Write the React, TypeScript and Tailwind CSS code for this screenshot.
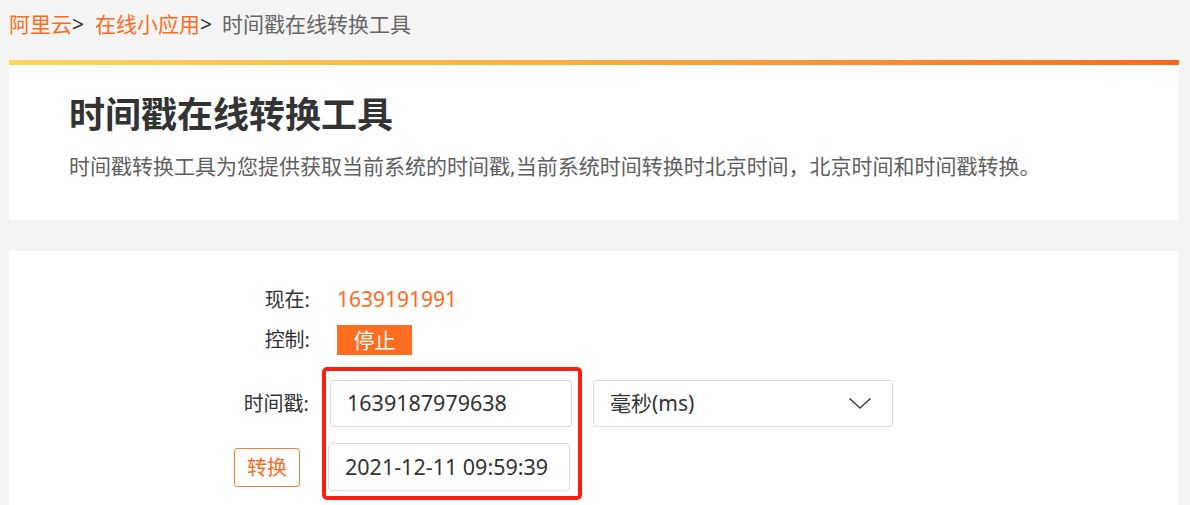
import React from "react";

const FONT = '"Noto Sans", "Noto Sans CJK SC", sans-serif';

export default function App() {
  return (
    <div
      className="min-h-[505px] bg-[#f4f4f4] pl-[9px] pr-[11px]"
      style={{ fontFamily: FONT }}
    >
      {/* breadcrumb */}
      <div className="h-[60px] pt-[10px] text-[21px] leading-[28px] flex items-start">
        <span className="text-[#ff6a1a]">阿里云</span>
        <span className="text-[#333] mr-[11px]">&gt;</span>
        <span className="text-[#ff6a1a]">在线小应用</span>
        <span className="text-[#333] mr-[10px]">&gt;</span>
        <span className="text-[#666]">时间戳在线转换工具</span>
      </div>

      {/* header card */}
      <div className="bg-white h-[160px]">
        <div className="h-[5px] bg-gradient-to-r from-[#fdd65b] via-[#fbab3c] to-[#f9691c]" />
        <div className="pl-[60px] pt-[26px]">
          <h1 className="text-[36px] leading-[48px] font-bold text-[#333]">
            时间戳在线转换工具
          </h1>
          <p className="mt-[12px] text-[21px] leading-[30px] text-[#5f5f5f]">
            时间戳转换工具为您提供获取当前系统的时间戳,当前系统时间转换时北京时间，北京时间和时间戳转换。
          </p>
        </div>
      </div>

      {/* tool card */}
      <div className="relative bg-white mt-[31px] h-[254px] pt-[34px]">
        {/* row 1 */}
        <div className="flex items-center h-[30px]">
          <div className="w-[301px] text-right text-[20px] text-[#333]">现在:</div>
          <div className="ml-[27px] text-[21px] text-[#ff6a1f]">1639191991</div>
        </div>
        {/* row 2 */}
        <div className="flex items-center h-[30px] mt-[10px]">
          <div className="w-[301px] text-right text-[20px] text-[#333]">控制:</div>
          <button className="ml-[27px] w-[75px] h-[30px] bg-[#ff6d21] text-white text-[21px] leading-[30px]">
            停止
          </button>
        </div>
        {/* row 3 */}
        <div className="flex items-center mt-[25px]">
          <div className="w-[300px] text-right text-[20px] text-[#333]">时间戳:</div>
          <div className="ml-[21px] w-[242px] h-[47px] border border-[#dcdcdc] rounded-[3px] flex items-center pl-[16px] text-[21.5px] text-[#333]">
            1639187979638
          </div>
          <div className="ml-[21px] w-[300px] h-[47px] border border-[#dcdcdc] rounded-[3px] flex items-center justify-between pl-[16px] pr-[20px] text-[21px] text-[#333]">
            <span>毫秒(ms)</span>
            <svg width="24" height="13" viewBox="0 0 24 13" fill="none">
              <path d="M1.5 1.5 L12 11 L22.5 1.5" stroke="#444" strokeWidth="1.6" />
            </svg>
          </div>
        </div>
        {/* row 4 */}
        <div className="flex items-center mt-[16px]">
          <div className="w-[291px] flex justify-end">
            <button className="w-[66px] h-[39px] border border-[#ff7a3a] rounded-[3px] text-[#ff6a1f] text-[20px] leading-[37px]">
              转换
            </button>
          </div>
          <div className="ml-[28px] w-[242px] h-[48px] border border-[#dcdcdc] rounded-[3px] flex items-center pl-[16px] text-[21.5px] text-[#333]">
            2021-12-11 09:59:39
          </div>
        </div>

        {/* red annotation box */}
        <div className="absolute left-[313px] top-[116px] w-[260px] h-[133px] border-4 border-[#fa1e12] rounded-[5px] pointer-events-none" />
      </div>
    </div>
  );
}
